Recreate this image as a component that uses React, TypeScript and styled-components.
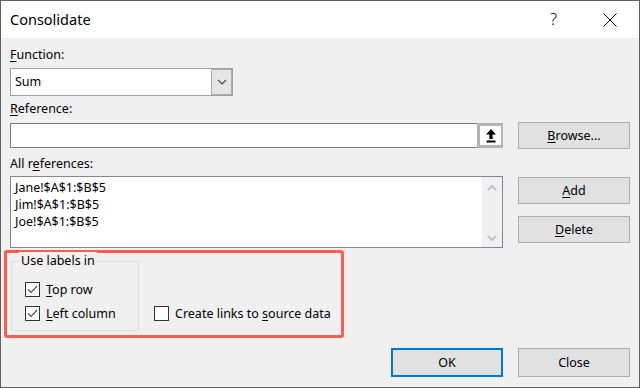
import React from "react";
import styled, { createGlobalStyle } from "styled-components";

const GlobalStyle = createGlobalStyle`
  html, body {
    margin: 0;
    padding: 0;
    background: #ffffff;
  }
  body {
    font-family: "Noto Sans", "Open Sans", sans-serif;
    font-size: 12.5px;
    color: #000000;
  }
`;

const Window = styled.div`
  width: 640px;
  height: 388px;
  box-sizing: border-box;
  border: 1px solid #5f5f5f;
  background: #f0f0f0;
  display: flex;
  flex-direction: column;
`;

const TitleBar = styled.div`
  height: 37px;
  flex: none;
  background: #ffffff;
  display: flex;
  align-items: center;
  padding-left: 9px;
`;

const Title = styled.div`
  flex: 1;
  font-size: 14.5px;
  margin-top: -1px;
`;

const HelpGlyph = styled.div`
  font-size: 16px;
  font-weight: 300;
  margin-right: 46px;
  margin-top: -1px;
`;

const CloseGlyph = styled.svg`
  width: 14px;
  height: 14px;
  margin-right: 22px;
`;

const Body = styled.div`
  display: flex;
  flex-direction: column;
  padding: 8px 9px 0 9px;
`;

const FieldLabel = styled.div<{ $gap?: number }>`
  height: 18px;
  line-height: 18px;
  margin-top: ${p => p.$gap ?? 0}px;
`;

const SelectBox = styled.div`
  margin-top: 4px;
  width: 223px;
  height: 28px;
  box-sizing: border-box;
  border: 1px solid #a0a0a0;
  background: #ffffff;
  display: flex;
`;

const SelectValue = styled.div`
  flex: 1;
  padding-left: 4px;
  line-height: 26px;
`;

const SelectArrow = styled.div`
  width: 21px;
  box-sizing: border-box;
  background: #e5e5e5;
  border: 1px solid #adadad;
  display: flex;
  align-items: center;
  justify-content: center;
`;

const InputRow = styled.div`
  margin-top: 4px;
  display: flex;
  align-items: center;
  gap: 15px;
`;

const RefInput = styled.div`
  width: 493px;
  height: 25px;
  box-sizing: border-box;
  border: 1px solid #7a7a7a;
  background: #ffffff;
  display: flex;
  justify-content: flex-end;
`;

const CollapseButton = styled.div`
  width: 26px;
  box-sizing: border-box;
  border: 3px solid #b4b4b4;
  border-right-width: 2px;
  margin: -1px -1px -1px 0;
  background: #ffffff;
  display: flex;
  align-items: center;
  justify-content: center;
`;

const Button = styled.div<{ $default?: boolean; $tall?: boolean }>`
  width: 112px;
  height: ${p => (p.$tall ? 29 : 27)}px;
  box-sizing: border-box;
  background: #e1e1e1;
  border: ${p => (p.$default ? "2px solid #0078d7" : "1px solid #adadad")};
  display: flex;
  align-items: center;
  justify-content: center;
  padding-bottom: 1px;
`;

const ListRow = styled.div`
  margin-top: 3px;
  display: flex;
  align-items: flex-start;
  gap: 15px;
`;

const ListBox = styled.div`
  width: 493px;
  height: 72px;
  box-sizing: border-box;
  border: 1px solid #828790;
  background: #ffffff;
  display: flex;
`;

const ListItems = styled.div`
  flex: 1;
  padding: 2px 0 0 4px;
  line-height: 17px;
`;

const ScrollTrack = styled.div`
  width: 20px;
  background: #f0f0f0;
  display: flex;
  flex-direction: column;
  justify-content: space-between;
  align-items: center;
  padding: 8px 0 6px;
`;

const SideButtons = styled.div`
  padding-top: 1px;
  display: flex;
  flex-direction: column;
  gap: 12px;
`;

const Highlight = styled.div`
  margin: 2px 0 0 -6px;
  width: 340px;
  height: 88px;
  box-sizing: border-box;
  border: 3px solid #ff5c50;
  border-radius: 3px;
  padding: 8px 0 0 4px;
  display: flex;
  align-items: flex-end;
  gap: 15px;
`;

const GroupBox = styled.div`
  position: relative;
  width: 128px;
  height: 70px;
  box-sizing: border-box;
  border: 1px solid #dcdcdc;
  padding: 18px 0 0 13px;
  display: flex;
  flex-direction: column;
  gap: 6px;
  align-self: flex-start;
`;

const Legend = styled.div`
  position: absolute;
  top: -10px;
  left: 7px;
  padding: 0 2px;
  background: #f0f0f0;
  line-height: 18px;
`;

const CheckRow = styled.div<{ $lift?: number }>`
  height: 18px;
  display: flex;
  align-items: center;
  gap: 6px;
  margin-bottom: ${p => p.$lift ?? 0}px;
`;

const Box = styled.div`
  width: 15px;
  height: 15px;
  box-sizing: border-box;
  border: 1px solid #333333;
  background: #ffffff;
  display: flex;
  align-items: center;
  justify-content: center;
`;

const Footer = styled.div`
  margin-top: 10px;
  display: flex;
  justify-content: flex-end;
  gap: 15px;
`;

const Key = styled.span`
  text-decoration: underline;
  text-underline-offset: 2px;
`;

const Chevron = ({ up }: { up?: boolean }) => (
  <svg width="10" height="6" viewBox="0 0 10 6">
    <polyline
      points={up ? "1,5 5,1 9,5" : "1,1 5,5 9,1"}
      fill="none"
      stroke="#c2c2c2"
      strokeWidth="2"
    />
  </svg>
);

const CheckBox = ({ checked, label, lift }: { checked?: boolean; label: React.ReactNode; lift?: number }) => (
  <CheckRow $lift={lift}>
    <Box>
      {checked && (
        <svg width="13" height="13" viewBox="0 0 13 13">
          <polyline points="2,6.5 5,9.5 11,3" fill="none" stroke="#4d4d4d" strokeWidth="1.2" />
        </svg>
      )}
    </Box>
    <span>{label}</span>
  </CheckRow>
);

export default function App() {
  return (
    <>
      <GlobalStyle />
      <Window>
        <TitleBar>
          <Title>Consolidate</Title>
          <HelpGlyph>?</HelpGlyph>
          <CloseGlyph viewBox="0 0 14 14">
            <path d="M0.5 0.5 L13.5 13.5 M13.5 0.5 L0.5 13.5" stroke="#000" strokeWidth="1" />
          </CloseGlyph>
        </TitleBar>
        <Body>
          <FieldLabel>
            <Key>F</Key>unction:
          </FieldLabel>
          <SelectBox>
            <SelectValue>Sum</SelectValue>
            <SelectArrow>
              <svg width="10" height="6" viewBox="0 0 10 6">
                <polyline points="1,1 5,5 9,1" fill="none" stroke="#444" strokeWidth="1.1" />
              </svg>
            </SelectArrow>
          </SelectBox>
          <FieldLabel $gap={4}>
            <Key>R</Key>eference:
          </FieldLabel>
          <InputRow>
            <RefInput>
              <CollapseButton>
                <svg width="10" height="14" viewBox="0 0 10 14">
                  <path d="M5 0 L10 5.5 L6.6 5.5 L6.6 10 L3.4 10 L3.4 5.5 L0 5.5 Z" fill="#000" />
                  <rect x="0.5" y="11.5" width="9" height="2" fill="#000" />
                </svg>
              </CollapseButton>
            </RefInput>
            <Button>
              <span>
                <Key>B</Key>rowse...
              </span>
            </Button>
          </InputRow>
          <FieldLabel $gap={6}>
            All r<Key>e</Key>ferences:
          </FieldLabel>
          <ListRow>
            <ListBox>
              <ListItems>
                <div>Jane!$A$1:$B$5</div>
                <div>Jim!$A$1:$B$5</div>
                <div>Joe!$A$1:$B$5</div>
              </ListItems>
              <ScrollTrack>
                <Chevron up />
                <Chevron />
              </ScrollTrack>
            </ListBox>
            <SideButtons>
              <Button>
                <span>
                  <Key>A</Key>dd
                </span>
              </Button>
              <Button>
                <span>
                  <Key>D</Key>elete
                </span>
              </Button>
            </SideButtons>
          </ListRow>
          <Highlight>
            <GroupBox>
              <Legend>Use labels in</Legend>
              <CheckBox checked label={<><Key>T</Key>op row</>} />
              <CheckBox checked label={<><Key>L</Key>eft column</>} />
            </GroupBox>
            <CheckBox lift={13} label={<>Create links to <Key>s</Key>ource data</>} />
          </Highlight>
          <Footer>
            <Button $default $tall>OK</Button>
            <Button $tall>Close</Button>
          </Footer>
        </Body>
      </Window>
    </>
  );
}
